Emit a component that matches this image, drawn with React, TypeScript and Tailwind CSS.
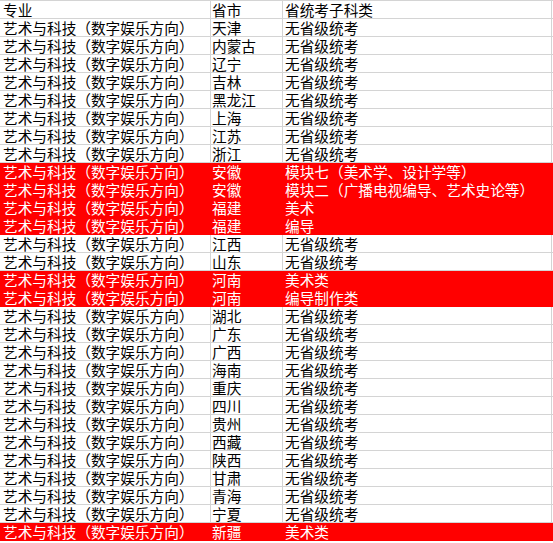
import React from "react";

interface Row {
  major: string;
  province: string;
  subject: string;
  highlight?: boolean;
}

const MAJOR = "艺术与科技（数字娱乐方向）";

const provinces: [string, string, boolean?][] = [
  ["天津", "无省级统考"],
  ["内蒙古", "无省级统考"],
  ["辽宁", "无省级统考"],
  ["吉林", "无省级统考"],
  ["黑龙江", "无省级统考"],
  ["上海", "无省级统考"],
  ["江苏", "无省级统考"],
  ["浙江", "无省级统考"],
  ["安徽", "模块七（美术学、设计学等）", true],
  ["安徽", "模块二（广播电视编导、艺术史论等）", true],
  ["福建", "美术", true],
  ["福建", "编导", true],
  ["江西", "无省级统考"],
  ["山东", "无省级统考"],
  ["河南", "美术类", true],
  ["河南", "编导制作类", true],
  ["湖北", "无省级统考"],
  ["广东", "无省级统考"],
  ["广西", "无省级统考"],
  ["海南", "无省级统考"],
  ["重庆", "无省级统考"],
  ["四川", "无省级统考"],
  ["贵州", "无省级统考"],
  ["西藏", "无省级统考"],
  ["陕西", "无省级统考"],
  ["甘肃", "无省级统考"],
  ["青海", "无省级统考"],
  ["宁夏", "无省级统考"],
  ["新疆", "美术类", true],
];

const rows: Row[] = provinces.map(([province, subject, highlight]) => ({
  major: MAJOR,
  province,
  subject,
  highlight: !!highlight,
}));

const SheetRow = ({ row }: { row: Row }) => {
  const red = row.highlight;
  const cell = red
    ? "border-b border-r border-[#ff0000]"
    : "border-b border-r border-[#d4d4d4]";
  return (
    <div
      className={`flex h-[18px] leading-[17px] whitespace-nowrap ${
        red ? "bg-[#ff0000] text-white" : "bg-white text-black"
      }`}
    >
      <div className={`w-[211px] pl-[3px] overflow-hidden ${cell}`}>
        {row.major}
      </div>
      <div className={`w-[72px] pl-[1px] overflow-hidden ${cell}`}>
        {row.province}
      </div>
      <div className={`w-[269px] pl-[2px] overflow-hidden ${cell}`}>
        {row.subject}
      </div>
      <div
        className={`flex-1 border-b ${
          red ? "border-[#ff0000]" : "border-[#d4d4d4]"
        }`}
      />
    </div>
  );
};

export default function App() {
  return (
    <div
      className="w-[553px] h-[543px] bg-white overflow-hidden text-[14.67px] [text-spacing-trim:space-all]"
      style={{ fontFamily: '"Noto Sans CJK SC", sans-serif' }}
    >
      <div className="border-t border-[#d4d4d4]">
        <SheetRow row={{ major: "专业", province: "省市", subject: "省统考子科类" }} />
        {rows.map((r, i) => (
          <SheetRow key={i} row={r} />
        ))}
      </div>
    </div>
  );
}
